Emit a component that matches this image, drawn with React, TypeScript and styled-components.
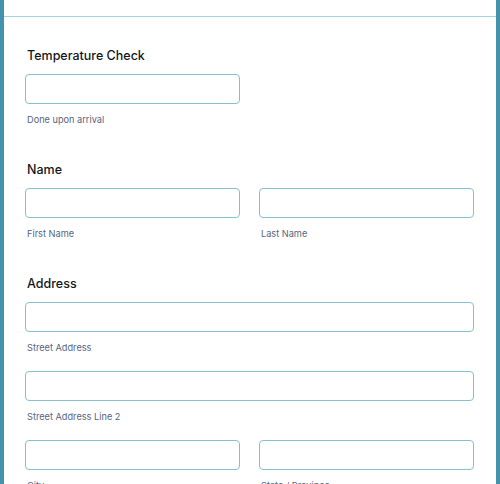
import React from 'react';
import styled, { createGlobalStyle } from 'styled-components';

const GlobalStyle = createGlobalStyle`
  html, body {
    margin: 0;
    padding: 0;
    background: #ffffff;
  }
  body {
    font-family: Inter, "Noto Sans", sans-serif;
  }
`;

const Page = styled.div`
  box-sizing: border-box;
  min-height: 484px;
  border-left: 4px solid #4293ab;
  border-right: 4px solid #4293ab;
  background: #ffffff;
`;

const TopBar = styled.div`
  height: 16px;
  border-bottom: 1px solid #a0d4e1;
`;

const Form = styled.form`
  display: flex;
  flex-direction: column;
  gap: 34px;
  padding: 29px 22px 0 21px;
`;

const Section = styled.div`
  display: flex;
  flex-direction: column;
`;

const Heading = styled.div`
  padding: 1px 0 0 2px;
  font-size: 12.5px;
  line-height: 18px;
  font-weight: 500;
  color: #14171c;
  margin-bottom: 9px;
`;

const Rows = styled.div`
  display: flex;
  flex-direction: column;
  gap: 17px;
`;

const Row = styled.div<{ $cols: number }>`
  display: grid;
  grid-template-columns: repeat(${({ $cols }) => $cols}, 1fr);
  column-gap: 19px;
`;

const Field = styled.div`
  display: flex;
  flex-direction: column;
`;

const Input = styled.input`
  box-sizing: border-box;
  height: 30px;
  width: 100%;
  border: 1px solid #87c0cd;
  border-radius: 4px;
  background: #ffffff;
  padding: 0 8px;
  font-family: inherit;
  font-size: 13px;
  outline: none;
`;

const SubLabel = styled.label`
  margin-top: 10px;
  padding-left: 2px;
  font-size: 9.2px;
  line-height: 12px;
  color: #57647e;
`;

type Item = { label: string; half?: boolean };

const sections: { title: string; rows: Item[][] }[] = [
  { title: 'Temperature Check', rows: [[{ label: 'Done upon arrival', half: true }]] },
  { title: 'Name', rows: [[{ label: 'First Name' }, { label: 'Last Name' }]] },
  {
    title: 'Address',
    rows: [
      [{ label: 'Street Address' }],
      [{ label: 'Street Address Line 2' }],
      [{ label: 'City' }, { label: 'State / Province' }],
    ],
  },
];

export default function App() {
  return (
    <>
      <GlobalStyle />
      <Page>
        <TopBar />
        <Form onSubmit={(e) => e.preventDefault()}>
          {sections.map((s) => (
            <Section key={s.title}>
              <Heading>{s.title}</Heading>
              <Rows>
                {s.rows.map((row, i) => (
                  <Row key={i} $cols={row.length === 1 && !row[0].half ? 1 : 2}>
                    {row.map((f) => (
                      <Field key={f.label}>
                        <Input type="text" />
                        <SubLabel>{f.label}</SubLabel>
                      </Field>
                    ))}
                  </Row>
                ))}
              </Rows>
            </Section>
          ))}
        </Form>
      </Page>
    </>
  );
}
